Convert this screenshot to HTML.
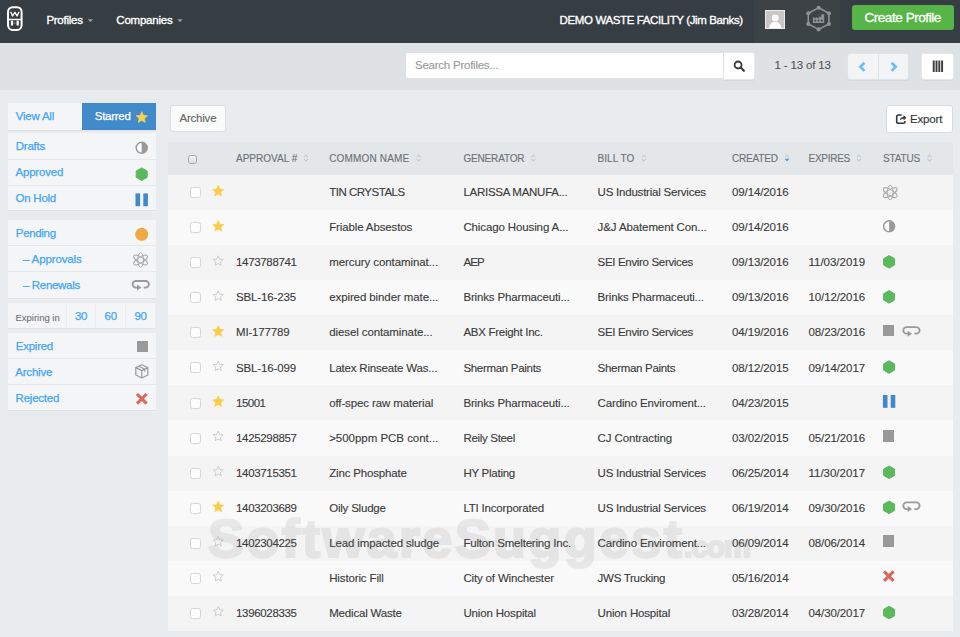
<!DOCTYPE html>
<html lang="en"><head><meta charset="utf-8"><title>Profiles - Demo Waste Facility</title>
<style>
*{box-sizing:border-box;margin:0;padding:0}
html,body{width:960px;height:637px;overflow:hidden}
body{background:#e9ecef;font-family:"Liberation Sans",sans-serif;font-size:11.5px;color:#3a3a3a;position:relative}
div,span,svg,header,aside,main{position:absolute;display:block}
svg:not(.i){position:static;display:block}
.t{white-space:pre;line-height:14px;height:14px;-webkit-text-stroke:.12px currentColor}
.i{display:block;overflow:visible}
.nav{left:0;top:0;width:960px;height:43px;background:#363d43}
.nv{color:#fff;-webkit-text-stroke:.35px #fff}
.nv2{color:#fff;-webkit-text-stroke:.3px #fff}
.nv3{color:#fff;-webkit-text-stroke:.25px #fff}
.sec{background:#3b4347}
.user{background:#c9c7c5;border:1px solid #ecebea;overflow:hidden}
.create{border-radius:3px;background:#57b548}
.sub{left:0;top:0;width:960px;height:90px}
.sub:before{content:"";position:absolute;left:0;top:43px;width:960px;height:47px;background:#dee2e5}
.inp{background:#fff;border-radius:2px 0 0 2px}
.sbtn{background:#fff;border:1px solid #e6e9eb;border-left-color:#dfe2e5;border-radius:0 3px 3px 0;box-shadow:0 1px 0 rgba(0,0,0,.04)}
.pg{background:#f3f4f6;border:1px solid #e1e4e7;border-radius:3px;box-shadow:0 1px 0 rgba(0,0,0,.04)}
.pgd{background:#dfe2e5}
.colb{background:#fff;border:1px solid #e6e9eb;border-radius:3px;box-shadow:0 1px 0 rgba(0,0,0,.04)}
.btn{background:#f9fafa;border:1px solid #dcdfe2;border-radius:3px}
.btn.ex{background:#fff;border-color:#d9dcdf}
.side{left:0;top:0}
.p{background:#f4f5f7;box-shadow:0 1px 0 #dfe2e5}
.sp{background:#e6e9ec}
.bl{color:#42a5f5;-webkit-text-stroke:.25px #42a5f5}
.starred{background:#428bca}
.sq{background:#999}
.tbl{left:0;top:0}
.th{background:#e4e7ea}
.hd{color:#6c7176}
.hcb{border:1px solid #a6a6a6;border-radius:2.5px;background:linear-gradient(#f4f4f4,#dcdcdc)}
.r{background:#f9f9f9}
.r.odd{background:#f4f4f4}
.cb{background:#fdfdfd;border:1px solid #d6d6d6;border-radius:2.5px}
.wm{left:208px;top:503px;height:70px;line-height:70px;font-weight:bold;color:#6e6e6e;-webkit-text-stroke:2.2px #6e6e6e;opacity:.115;white-space:nowrap}
.wm span{position:static;display:inline}
.wm1{font-size:54px}
.wm2{font-size:30px}
</style></head>
<body>
<header class="nav">
<svg class="i" style="left:6px;top:5px" width="18" height="27" viewBox="0 0 18 27"><g transform="translate(0 0) scale(1 1)"><rect x="2.05" y="2.2" width="13.55" height="22.7" rx="4.6" ry="4.6" fill="none" stroke="#fff" stroke-width="2"/><path d="M2.5 14.5h12.7" stroke="#fff" stroke-width="1.5"/><path d="M4.7 6.7l1.9 4.3 2.25-3.7 2.25 3.7 1.9-4.3" fill="none" stroke="#fff" stroke-width="1.4" stroke-linejoin="round"/><path d="M6 15.8v4.8M11.7 15.8v4.8" stroke="#fff" stroke-width="2.3"/><path d="M8.85 17.5v1.2" stroke="#fff" stroke-width="1" opacity=".7"/></g></svg>
<span class="t nv" style="left:46.4px;top:13px;letter-spacing:-0.26px">Profiles</span>
<svg class="i" style="left:87px;top:19px" width="6" height="4" viewBox="0 0 6 4"><g transform="translate(0.8 0.2) scale(1 1)"><path d="M0 0h5.2L2.6 3z" fill="#979ca0"/></g></svg>
<span class="t nv" style="left:116.3px;top:13px;letter-spacing:-0.22px">Companies</span>
<svg class="i" style="left:177px;top:19px" width="6" height="4" viewBox="0 0 6 4"><g transform="translate(0.4 0.2) scale(1 1)"><path d="M0 0h5.2L2.6 3z" fill="#979ca0"/></g></svg>
<span class="t nv" style="left:559.6px;top:13px;letter-spacing:-0.38px">DEMO WASTE FACILITY (Jim Banks)</span>
<div class="sec" style="left:754px;top:0px;width:86px;height:43px"></div>
<div class="user" style="left:765px;top:9.5px;width:20px;height:19.5px"><svg width="19" height="18.5" viewBox="0 0 20 19.5"><circle cx="9.7" cy="7.3" r="3.6" fill="#fff"/><path d="M3.3 19.5c0-5.8 2.6-8 6.4-8s6.4 2.2 6.4 8z" fill="#fff"/></svg></div>
<svg class="i" style="left:805px;top:5px" width="27" height="27" viewBox="0 0 27 27"><g transform="translate(0 0) scale(1 1)"><path d="M13.6 2.8 L23.9 8.2 L23.9 19 L13.6 24.4 L3.3 19 L3.3 8.2Z" fill="none" stroke="#8e9296" stroke-width="1.6"/><g fill="#8e9296"><circle cx="13.6" cy="2.8" r="2.05"/><circle cx="23.9" cy="8.2" r="2.05"/><circle cx="23.9" cy="19" r="2.05"/><circle cx="13.6" cy="24.4" r="2.05"/><circle cx="3.3" cy="19" r="2.05"/><circle cx="3.3" cy="8.2" r="2.05"/><path d="M7.9 18.1v-6.2l2.9 1.6v-1.6l2.9 1.6V9.2h5.5v8.9z"/></g><g fill="#3b4347"><rect x="9.5" y="14.8" width="1.7" height="1.6"/><rect x="12.7" y="14.8" width="1.7" height="1.6"/><rect x="15.9" y="14.8" width="1.7" height="1.6"/><rect x="13.7" y="9.2" width="2.6" height="2.6"/></g></g></svg>
<div class="create" style="left:852px;top:5px;width:102px;height:25px"></div>
<span class="t nv2" style="left:864.4px;top:11px;letter-spacing:-0.43px;font-size:13.5px">Create Profile</span>
</header>
<div class="sub">
<div class="inp" style="left:405.5px;top:53px;width:318px;height:25px"></div>
<span class="t" style="left:415px;top:58px;letter-spacing:-0.24px;color:#999">Search Profiles...</span>
<div class="sbtn" style="left:723px;top:52px;width:32px;height:28px"></div>
<svg class="i" style="left:733px;top:60px" width="12" height="12" viewBox="0 0 12 12"><g transform="translate(0.4 0.3) scale(1 1)"><circle cx="4.7" cy="4.7" r="3.5" fill="none" stroke="#3a3a3a" stroke-width="1.8"/><path d="M7.3 7.3l3.2 3.2" stroke="#3a3a3a" stroke-width="2.1" stroke-linecap="round"/></g></svg>
<span class="t" style="left:774.6px;top:58px;letter-spacing:-0.17px;color:#555">1 - 13 of 13</span>
<div class="pg" style="left:847px;top:53px;width:62px;height:27px"></div>
<div class="pgd" style="left:878px;top:54px;width:1px;height:25px"></div>
<svg class="i" style="left:858px;top:61px" width="8" height="11" viewBox="0 0 8 11"><g transform="translate(0.3 0.6) scale(1 1)"><path d="M6.2 1.1L2.1 5.2l4.1 4.1" fill="none" stroke="#6cbdf7" stroke-width="2.7"/></g></svg>
<svg class="i" style="left:890px;top:61px" width="8" height="11" viewBox="0 0 8 11"><g transform="translate(0.4 0.6) scale(1 1)"><path d="M1.2 1.1l4.1 4.1-4.1 4.1" fill="none" stroke="#6cbdf7" stroke-width="2.7"/></g></svg>
<div class="colb" style="left:921px;top:53px;width:33px;height:27px"></div>
<svg class="i" style="left:932px;top:60px" width="12" height="12" viewBox="0 0 12 12"><g transform="translate(0.7 0.6) scale(1 1)"><path d="M1 0v11.3M3.8 0v11.3M6.6 0v11.3M9.4 0v11.3" stroke="#3c3c3c" stroke-width="1.9"/></g></svg>
</div>
<div class="btn" style="left:169.5px;top:105px;width:56px;height:26.5px"></div>
<span class="t" style="left:179.5px;top:111px;letter-spacing:-0.22px;color:#666">Archive</span>
<div class="btn ex" style="left:885.5px;top:105px;width:67.5px;height:27.5px"></div>
<svg class="i" style="left:895px;top:113px" width="12" height="12" viewBox="0 0 12 12"><g transform="translate(0.3 0.7) scale(0.917 0.917)"><path d="M7 1.5H3.2A1.7 1.7 0 0 0 1.5 3.2v5.6a1.7 1.7 0 0 0 1.7 1.7h5.6a1.7 1.7 0 0 0 1.7-1.7V8" fill="none" stroke="#333" stroke-width="1.7"/><path d="M5 7.5c0-2.5 1.5-4 4-4V1.5l3 3-3 3V5.5c-1.5 0-2.8.5-4 2z" fill="#333"/></g></svg>
<span class="t" style="left:910px;top:112px;letter-spacing:-0.17px;color:#333">Export</span>
<aside class="side"><div class="p" style="left:8px;top:103px;width:148px;height:27px"></div>
<div class="starred" style="left:81.5px;top:103px;width:74.5px;height:26.5px"></div>
<span class="t bl" style="left:15.8px;top:109px;letter-spacing:-0.23px">View All</span>
<span class="t nv3" style="left:94.8px;top:109px;letter-spacing:-0.27px">Starred</span>
<svg class="i" style="left:135px;top:110px" width="14" height="14" viewBox="0 0 14 14"><g transform="translate(0.5 0.9) scale(0.525 0.525)"><path d="M12 1.5l3.1 7 7.6.8-5.7 5.1 1.6 7.5L12 18.1l-6.6 3.8 1.6-7.5L1.3 9.3l7.6-.8z" fill="#f9d24f" stroke="#f9d24f" stroke-width="1.3" stroke-linejoin="round"/></g></svg>
<div class="p" style="left:8px;top:132.5px;width:148px;height:77.5px"></div>
<div class="sp" style="left:8px;top:158.5px;width:148px;height:1px"></div>
<div class="sp" style="left:8px;top:185px;width:148px;height:1px"></div>
<span class="t bl" style="left:15.8px;top:139px;letter-spacing:-0.25px">Drafts</span>
<svg class="i" style="left:135px;top:141px" width="14" height="14" viewBox="0 0 14 14"><g transform="translate(0.2 0.3) scale(1 1)"><circle cx="6.5" cy="6.5" r="5.5" fill="#fcfcfc" stroke="#9a9a9a" stroke-width="1.5"/><path d="M6.5 1a5.5 5.5 0 0 1 0 11z" fill="#9a9a9a"/></g></svg>
<span class="t bl" style="left:15.5px;top:165px;letter-spacing:-0.2px">Approved</span>
<svg class="i" style="left:135px;top:167px" width="14" height="15" viewBox="0 0 14 15"><g transform="translate(0.2 0.2) scale(1 1)"><path d="M6.5 0.7l5.5 3.15v6.3l-5.5 3.15L1 10.15v-6.3z" fill="#5cb85c" stroke="#5cb85c" stroke-width="1" stroke-linejoin="round"/></g></svg>
<span class="t bl" style="left:15.5px;top:191px;letter-spacing:-0.24px">On Hold</span>
<svg class="i" style="left:135px;top:193px" width="13" height="14" viewBox="0 0 13 14"><g transform="translate(0.5 0.4) scale(1 1)"><rect x="0" y="0" width="4.6" height="12.8" fill="#3f88cc"/><rect x="7.8" y="0" width="4.6" height="12.8" fill="#3f88cc"/></g></svg>
<div class="p" style="left:8px;top:219.5px;width:148px;height:78px"></div>
<div class="sp" style="left:8px;top:245px;width:148px;height:1px"></div>
<div class="sp" style="left:8px;top:271px;width:148px;height:1px"></div>
<span class="t bl" style="left:15.8px;top:226px;letter-spacing:-0.32px">Pending</span>
<svg class="i" style="left:135px;top:227px" width="14" height="14" viewBox="0 0 14 14"><g transform="translate(0.1 0.7) scale(1 1)"><circle cx="6.6" cy="6.6" r="6.5" fill="#f0a845"/></g></svg>
<span class="t bl" style="left:22.9px;top:252px;letter-spacing:-0.12px">– Approvals</span>
<svg class="i" style="left:132px;top:252px" width="17" height="16" viewBox="0 0 17 16"><g transform="translate(0.6 0) scale(1 1)"><g fill="none" stroke="#a8a8a8" stroke-width=".95"><ellipse cx="8" cy="8" rx="7.2" ry="2.9" transform="rotate(90 8 8)"/><ellipse cx="8" cy="8" rx="7.9" ry="2.9" transform="rotate(32 8 8)"/><ellipse cx="8" cy="8" rx="7.9" ry="2.9" transform="rotate(-32 8 8)"/></g></g></svg>
<span class="t bl" style="left:22.9px;top:278px;letter-spacing:-0.31px">– Renewals</span>
<svg class="i" style="left:131px;top:280px" width="19" height="11" viewBox="0 0 19 11"><g transform="translate(0.7 0) scale(1 1)"><path d="M12 7.6h1.9a3.3 3.3 0 0 0 0-6.6H4.2a3.3 3.3 0 0 0 0 6.6h2" fill="none" stroke="#9a9a9a" stroke-width="1.8"/><path d="M5.3 4.6l4.4 3-4.4 3z" fill="#9a9a9a"/></g></svg>
<div class="p" style="left:8px;top:303px;width:58px;height:25px"></div>
<div class="p" style="left:67px;top:303px;width:28px;height:25px"></div>
<div class="p" style="left:96px;top:303px;width:29px;height:25px"></div>
<div class="p" style="left:126px;top:303px;width:29px;height:25px"></div>
<span class="t" style="left:15.5px;top:311px;letter-spacing:-0.01px;font-size:9.5px;color:#737373">Expiring in</span>
<span class="t bl" style="left:74.9px;top:309px;letter-spacing:-0.3px">30</span>
<span class="t bl" style="left:104.6px;top:309px;letter-spacing:-0.3px">60</span>
<span class="t bl" style="left:134.4px;top:309px;letter-spacing:-0.3px">90</span>
<div class="p" style="left:8px;top:333px;width:148px;height:77px"></div>
<div class="sp" style="left:8px;top:358px;width:148px;height:1px"></div>
<div class="sp" style="left:8px;top:384px;width:148px;height:1px"></div>
<span class="t bl" style="left:15.8px;top:339px;letter-spacing:-0.26px">Expired</span>
<div class="sq" style="left:136.95px;top:340.65px;width:11.3px;height:11.5px"></div>
<span class="t bl" style="left:15.3px;top:365px;letter-spacing:-0.22px">Archive</span>
<svg class="i" style="left:134px;top:363px" width="16" height="16" viewBox="0 0 16 16"><g transform="translate(0.3 0.9) scale(1 1)"><g fill="none" stroke="#9a9a9a" stroke-width="1.2" stroke-linejoin="round"><path d="M7.5 0.9l6 2.8v7.4l-6 3-6-3V3.7z"/><path d="M1.5 3.7l6 3 6-3M7.5 6.7v7.4M4.5 2.3l6 3v2.5"/></g></g></svg>
<span class="t bl" style="left:15.6px;top:391px;letter-spacing:-0.24px">Rejected</span>
<svg class="i" style="left:135px;top:392px" width="13" height="13" viewBox="0 0 13 13"><g transform="translate(0.8 0.7) scale(1 1)"><path d="M1.2 1.3l9.6 9.6M10.8 1.3l-9.6 9.6" stroke="#d9695a" stroke-width="3.1" fill="none"/></g></svg></aside>
<main class="tbl"><div class="th" style="left:168px;top:142px;width:785.3px;height:33px"></div>
<div class="hcb" style="left:188.3px;top:155px;width:9px;height:9px"></div>
<span class="t hd" style="left:236px;top:152px;letter-spacing:0.01px;font-size:10px">APPROVAL #</span>
<svg class="i" style="left:303px;top:154px" width="6" height="8" viewBox="0 0 6 8"><g transform="translate(0.6 0.5) scale(0.889 0.923)"><path d="M0.5 2.9L2.7 0.7l2.2 2.2M0.5 4.9l2.2 2.2 2.2-2.2" fill="none" stroke="#c2c7cc" stroke-width="1.1"/></g></svg>
<span class="t hd" style="left:329.2px;top:152px;letter-spacing:0.17px;font-size:10px">COMMON NAME</span>
<svg class="i" style="left:416px;top:154px" width="6" height="8" viewBox="0 0 6 8"><g transform="translate(0.2 0.5) scale(0.889 0.923)"><path d="M0.5 2.9L2.7 0.7l2.2 2.2M0.5 4.9l2.2 2.2 2.2-2.2" fill="none" stroke="#c2c7cc" stroke-width="1.1"/></g></svg>
<span class="t hd" style="left:463.4px;top:152px;letter-spacing:-0.16px;font-size:10px">GENERATOR</span>
<svg class="i" style="left:531px;top:154px" width="5" height="8" viewBox="0 0 5 8"><g transform="translate(0 0.5) scale(0.889 0.923)"><path d="M0.5 2.9L2.7 0.7l2.2 2.2M0.5 4.9l2.2 2.2 2.2-2.2" fill="none" stroke="#c2c7cc" stroke-width="1.1"/></g></svg>
<span class="t hd" style="left:597.6px;top:152px;letter-spacing:0.03px;font-size:10px">BILL TO</span>
<svg class="i" style="left:641px;top:154px" width="6" height="8" viewBox="0 0 6 8"><g transform="translate(0.3 0.5) scale(0.889 0.923)"><path d="M0.5 2.9L2.7 0.7l2.2 2.2M0.5 4.9l2.2 2.2 2.2-2.2" fill="none" stroke="#c2c7cc" stroke-width="1.1"/></g></svg>
<span class="t hd" style="left:732px;top:152px;letter-spacing:-0.18px;font-size:10px">CREATED</span>
<svg class="i" style="left:784px;top:154px" width="6" height="8" viewBox="0 0 6 8"><g transform="translate(0.6 0.5) scale(0.889 0.923)"><path d="M0.5 2.9L2.7 0.7l2.2 2.2" fill="none" stroke="#c2c7cc" stroke-width="1.1"/><path d="M2.7 7.6L5.2 4.6H0.2z" fill="#3d8fd6"/></g></svg>
<span class="t hd" style="left:808.5px;top:152px;letter-spacing:-0.27px;font-size:10px">EXPIRES</span>
<svg class="i" style="left:856px;top:154px" width="6" height="8" viewBox="0 0 6 8"><g transform="translate(0.6 0.5) scale(0.889 0.923)"><path d="M0.5 2.9L2.7 0.7l2.2 2.2M0.5 4.9l2.2 2.2 2.2-2.2" fill="none" stroke="#c2c7cc" stroke-width="1.1"/></g></svg>
<span class="t hd" style="left:882.9px;top:152px;letter-spacing:-0.13px;font-size:10px">STATUS</span>
<svg class="i" style="left:927px;top:154px" width="5" height="8" viewBox="0 0 5 8"><g transform="translate(0.2 0.5) scale(0.889 0.923)"><path d="M0.5 2.9L2.7 0.7l2.2 2.2M0.5 4.9l2.2 2.2 2.2-2.2" fill="none" stroke="#c2c7cc" stroke-width="1.1"/></g></svg>
<div class="r odd" style="left:168px;top:175px;width:785.3px;height:35px"></div>
<div class="cb" style="left:190px;top:187.1px;width:11px;height:11px"></div>
<svg class="i" style="left:212px;top:184px" width="13" height="14" viewBox="0 0 13 14"><g transform="translate(0 0.7) scale(0.517 0.517)"><path d="M12 1.5l3.1 7 7.6.8-5.7 5.1 1.6 7.5L12 18.1l-6.6 3.8 1.6-7.5L1.3 9.3l7.6-.8z" fill="#f9cd48" stroke="#f9cd48" stroke-width="1.3" stroke-linejoin="round"/></g></svg>
<span class="t" style="left:329.2px;top:185px;letter-spacing:-0.49px">TIN CRYSTALS</span>
<span class="t" style="left:463.4px;top:185px;letter-spacing:-0.27px">LARISSA MANUFA...</span>
<span class="t" style="left:597.6px;top:185px;letter-spacing:-0.22px">US Industrial Services</span>
<span class="t" style="left:732px;top:185px;letter-spacing:-0.11px">09/14/2016</span>
<svg class="i" style="left:882px;top:184px" width="17" height="17" viewBox="0 0 17 17"><g transform="translate(0.2 0.6) scale(1 1)"><g fill="none" stroke="#a8a8a8" stroke-width=".95"><ellipse cx="8" cy="8" rx="7.2" ry="2.9" transform="rotate(90 8 8)"/><ellipse cx="8" cy="8" rx="7.9" ry="2.9" transform="rotate(32 8 8)"/><ellipse cx="8" cy="8" rx="7.9" ry="2.9" transform="rotate(-32 8 8)"/></g></g></svg>
<div class="r" style="left:168px;top:210px;width:785.3px;height:35px"></div>
<div class="cb" style="left:190px;top:222.17px;width:11px;height:11px"></div>
<svg class="i" style="left:212px;top:219px" width="13" height="14" viewBox="0 0 13 14"><g transform="translate(0 0.77) scale(0.517 0.517)"><path d="M12 1.5l3.1 7 7.6.8-5.7 5.1 1.6 7.5L12 18.1l-6.6 3.8 1.6-7.5L1.3 9.3l7.6-.8z" fill="#f9cd48" stroke="#f9cd48" stroke-width="1.3" stroke-linejoin="round"/></g></svg>
<span class="t" style="left:329.2px;top:220px;letter-spacing:-0.13px">Friable Absestos</span>
<span class="t" style="left:463.4px;top:220px;letter-spacing:-0.12px">Chicago Housing A...</span>
<span class="t" style="left:597.6px;top:220px;letter-spacing:-0.11px">J&amp;J Abatement Con...</span>
<span class="t" style="left:732px;top:220px;letter-spacing:-0.11px">09/14/2016</span>
<svg class="i" style="left:882px;top:219px" width="14" height="14" viewBox="0 0 14 14"><g transform="translate(0.6 0.87) scale(1 1)"><circle cx="6.5" cy="6.5" r="5.5" fill="#fcfcfc" stroke="#9a9a9a" stroke-width="1.5"/><path d="M6.5 1a5.5 5.5 0 0 1 0 11z" fill="#9a9a9a"/></g></svg>
<div class="r odd" style="left:168px;top:245px;width:785.3px;height:35px"></div>
<div class="cb" style="left:190px;top:257.24px;width:11px;height:11px"></div>
<svg class="i" style="left:212px;top:254px" width="13" height="13" viewBox="0 0 13 13"><g transform="translate(0 0.34) scale(0.517 0.517)"><path d="M12 2.8l2.8 6.4 6.9.7-5.2 4.6 1.5 6.8L12 17.8l-6 3.5 1.5-6.8-5.2-4.6 6.9-.7z" fill="none" stroke="#c6c6c6" stroke-width="1.6" stroke-linejoin="round"/></g></svg>
<span class="t" style="left:236px;top:255px;letter-spacing:-0.33px">1473788741</span>
<span class="t" style="left:329.2px;top:255px;letter-spacing:-0.08px">mercury contaminat...</span>
<span class="t" style="left:463.4px;top:255px;letter-spacing:-0.81px">AEP</span>
<span class="t" style="left:597.6px;top:255px;letter-spacing:-0.33px">SEI Enviro Services</span>
<span class="t" style="left:732px;top:255px;letter-spacing:-0.11px">09/13/2016</span>
<span class="t" style="left:808.5px;top:255px;letter-spacing:-0.02px">11/03/2019</span>
<svg class="i" style="left:882px;top:254px" width="14" height="15" viewBox="0 0 14 15"><g transform="translate(0.6 0.84) scale(1 1)"><path d="M6.5 0.7l5.5 3.15v6.3l-5.5 3.15L1 10.15v-6.3z" fill="#5cb85c" stroke="#5cb85c" stroke-width="1" stroke-linejoin="round"/></g></svg>
<div class="r" style="left:168px;top:280px;width:785.3px;height:35px"></div>
<div class="cb" style="left:190px;top:292.31px;width:11px;height:11px"></div>
<svg class="i" style="left:212px;top:289px" width="13" height="13" viewBox="0 0 13 13"><g transform="translate(0 0.41) scale(0.517 0.517)"><path d="M12 2.8l2.8 6.4 6.9.7-5.2 4.6 1.5 6.8L12 17.8l-6 3.5 1.5-6.8-5.2-4.6 6.9-.7z" fill="none" stroke="#c6c6c6" stroke-width="1.6" stroke-linejoin="round"/></g></svg>
<span class="t" style="left:236px;top:290px;letter-spacing:-0.14px">SBL-16-235</span>
<span class="t" style="left:329.2px;top:290px;letter-spacing:-0.1px">expired binder mate...</span>
<span class="t" style="left:463.4px;top:290px;letter-spacing:-0.15px">Brinks Pharmaceuti...</span>
<span class="t" style="left:597.6px;top:290px;letter-spacing:-0.15px">Brinks Pharmaceuti...</span>
<span class="t" style="left:732px;top:290px;letter-spacing:-0.11px">09/13/2016</span>
<span class="t" style="left:808.5px;top:290px;letter-spacing:-0.11px">10/12/2016</span>
<svg class="i" style="left:882px;top:289px" width="14" height="15" viewBox="0 0 14 15"><g transform="translate(0.6 0.91) scale(1 1)"><path d="M6.5 0.7l5.5 3.15v6.3l-5.5 3.15L1 10.15v-6.3z" fill="#5cb85c" stroke="#5cb85c" stroke-width="1" stroke-linejoin="round"/></g></svg>
<div class="r odd" style="left:168px;top:315px;width:785.3px;height:35px"></div>
<div class="cb" style="left:190px;top:327.38px;width:11px;height:11px"></div>
<svg class="i" style="left:212px;top:324px" width="13" height="14" viewBox="0 0 13 14"><g transform="translate(0 0.98) scale(0.517 0.517)"><path d="M12 1.5l3.1 7 7.6.8-5.7 5.1 1.6 7.5L12 18.1l-6.6 3.8 1.6-7.5L1.3 9.3l7.6-.8z" fill="#f9cd48" stroke="#f9cd48" stroke-width="1.3" stroke-linejoin="round"/></g></svg>
<span class="t" style="left:236px;top:325px;letter-spacing:-0.18px">MI-177789</span>
<span class="t" style="left:329.2px;top:325px;letter-spacing:-0.1px">diesel contaminate...</span>
<span class="t" style="left:463.4px;top:325px;letter-spacing:-0.28px">ABX Freight Inc.</span>
<span class="t" style="left:597.6px;top:325px;letter-spacing:-0.33px">SEI Enviro Services</span>
<span class="t" style="left:732px;top:325px;letter-spacing:-0.11px">04/19/2016</span>
<span class="t" style="left:808.5px;top:325px;letter-spacing:-0.11px">08/23/2016</span>
<div class="sq" style="left:882.9px;top:324.93px;width:11.3px;height:11.5px"></div>
<svg class="i" style="left:902px;top:326px" width="19" height="11" viewBox="0 0 19 11"><g transform="translate(0.4 0.08) scale(1 1)"><path d="M12 7.6h1.9a3.3 3.3 0 0 0 0-6.6H4.2a3.3 3.3 0 0 0 0 6.6h2" fill="none" stroke="#9a9a9a" stroke-width="1.8"/><path d="M5.3 4.6l4.4 3-4.4 3z" fill="#9a9a9a"/></g></svg>
<div class="r" style="left:168px;top:350px;width:785.3px;height:35px"></div>
<div class="cb" style="left:190px;top:362.45px;width:11px;height:11px"></div>
<svg class="i" style="left:212px;top:359px" width="13" height="13" viewBox="0 0 13 13"><g transform="translate(0 0.55) scale(0.517 0.517)"><path d="M12 2.8l2.8 6.4 6.9.7-5.2 4.6 1.5 6.8L12 17.8l-6 3.5 1.5-6.8-5.2-4.6 6.9-.7z" fill="none" stroke="#c6c6c6" stroke-width="1.6" stroke-linejoin="round"/></g></svg>
<span class="t" style="left:236px;top:361px;letter-spacing:-0.14px">SBL-16-099</span>
<span class="t" style="left:329.2px;top:361px;letter-spacing:-0.19px">Latex Rinseate Was...</span>
<span class="t" style="left:463.4px;top:361px;letter-spacing:-0.3px">Sherman Paints</span>
<span class="t" style="left:597.6px;top:361px;letter-spacing:-0.3px">Sherman Paints</span>
<span class="t" style="left:732px;top:361px;letter-spacing:-0.11px">08/12/2015</span>
<span class="t" style="left:808.5px;top:361px;letter-spacing:-0.11px">09/14/2017</span>
<svg class="i" style="left:882px;top:360px" width="14" height="15" viewBox="0 0 14 15"><g transform="translate(0.6 0.05) scale(1 1)"><path d="M6.5 0.7l5.5 3.15v6.3l-5.5 3.15L1 10.15v-6.3z" fill="#5cb85c" stroke="#5cb85c" stroke-width="1" stroke-linejoin="round"/></g></svg>
<div class="r odd" style="left:168px;top:385px;width:785.3px;height:35px"></div>
<div class="cb" style="left:190px;top:397.52px;width:11px;height:11px"></div>
<svg class="i" style="left:212px;top:395px" width="13" height="13" viewBox="0 0 13 13"><g transform="translate(0 0.12) scale(0.517 0.517)"><path d="M12 1.5l3.1 7 7.6.8-5.7 5.1 1.6 7.5L12 18.1l-6.6 3.8 1.6-7.5L1.3 9.3l7.6-.8z" fill="#f9cd48" stroke="#f9cd48" stroke-width="1.3" stroke-linejoin="round"/></g></svg>
<span class="t" style="left:236px;top:396px;letter-spacing:-0.5px">15001</span>
<span class="t" style="left:329.2px;top:396px;letter-spacing:-0.12px">off-spec raw material</span>
<span class="t" style="left:463.4px;top:396px;letter-spacing:-0.15px">Brinks Pharmaceuti...</span>
<span class="t" style="left:597.6px;top:396px;letter-spacing:-0.14px">Cardino Enviroment...</span>
<span class="t" style="left:732px;top:396px;letter-spacing:-0.11px">04/23/2015</span>
<svg class="i" style="left:882px;top:395px" width="14" height="13" viewBox="0 0 14 13"><g transform="translate(0.9 0.02) scale(1 1)"><rect x="0" y="0" width="4.6" height="12.8" fill="#3f88cc"/><rect x="7.8" y="0" width="4.6" height="12.8" fill="#3f88cc"/></g></svg>
<div class="r" style="left:168px;top:420px;width:785.3px;height:36px"></div>
<div class="cb" style="left:190px;top:432.59px;width:11px;height:11px"></div>
<svg class="i" style="left:212px;top:429px" width="13" height="14" viewBox="0 0 13 14"><g transform="translate(0 0.69) scale(0.517 0.517)"><path d="M12 2.8l2.8 6.4 6.9.7-5.2 4.6 1.5 6.8L12 17.8l-6 3.5 1.5-6.8-5.2-4.6 6.9-.7z" fill="none" stroke="#c6c6c6" stroke-width="1.6" stroke-linejoin="round"/></g></svg>
<span class="t" style="left:236px;top:431px;letter-spacing:-0.33px">1425298857</span>
<span class="t" style="left:329.2px;top:431px;letter-spacing:-0.03px">&gt;500ppm PCB cont...</span>
<span class="t" style="left:463.4px;top:431px;letter-spacing:-0.31px">Reily Steel</span>
<span class="t" style="left:597.6px;top:431px;letter-spacing:-0.12px">CJ Contracting</span>
<span class="t" style="left:732px;top:431px;letter-spacing:-0.11px">03/02/2015</span>
<span class="t" style="left:808.5px;top:431px;letter-spacing:-0.11px">05/21/2016</span>
<div class="sq" style="left:882.9px;top:430.14px;width:11.3px;height:11.5px"></div>
<div class="r odd" style="left:168px;top:456px;width:785.3px;height:35px"></div>
<div class="cb" style="left:190px;top:467.66px;width:11px;height:11px"></div>
<svg class="i" style="left:212px;top:464px" width="13" height="14" viewBox="0 0 13 14"><g transform="translate(0 0.76) scale(0.517 0.517)"><path d="M12 2.8l2.8 6.4 6.9.7-5.2 4.6 1.5 6.8L12 17.8l-6 3.5 1.5-6.8-5.2-4.6 6.9-.7z" fill="none" stroke="#c6c6c6" stroke-width="1.6" stroke-linejoin="round"/></g></svg>
<span class="t" style="left:236px;top:466px;letter-spacing:-0.33px">1403715351</span>
<span class="t" style="left:329.2px;top:466px;letter-spacing:-0.17px">Zinc Phosphate</span>
<span class="t" style="left:463.4px;top:466px;letter-spacing:-0.25px">HY Plating</span>
<span class="t" style="left:597.6px;top:466px;letter-spacing:-0.22px">US Industrial Services</span>
<span class="t" style="left:732px;top:466px;letter-spacing:-0.11px">06/25/2014</span>
<span class="t" style="left:808.5px;top:466px;letter-spacing:-0.02px">11/30/2017</span>
<svg class="i" style="left:882px;top:465px" width="14" height="15" viewBox="0 0 14 15"><g transform="translate(0.6 0.26) scale(1 1)"><path d="M6.5 0.7l5.5 3.15v6.3l-5.5 3.15L1 10.15v-6.3z" fill="#5cb85c" stroke="#5cb85c" stroke-width="1" stroke-linejoin="round"/></g></svg>
<div class="r" style="left:168px;top:491px;width:785.3px;height:35px"></div>
<div class="cb" style="left:190px;top:502.73px;width:11px;height:11px"></div>
<svg class="i" style="left:212px;top:500px" width="13" height="13" viewBox="0 0 13 13"><g transform="translate(0 0.33) scale(0.517 0.517)"><path d="M12 1.5l3.1 7 7.6.8-5.7 5.1 1.6 7.5L12 18.1l-6.6 3.8 1.6-7.5L1.3 9.3l7.6-.8z" fill="#f9cd48" stroke="#f9cd48" stroke-width="1.3" stroke-linejoin="round"/></g></svg>
<span class="t" style="left:236px;top:501px;letter-spacing:-0.33px">1403203689</span>
<span class="t" style="left:329.2px;top:501px;letter-spacing:-0.21px">Oily Sludge</span>
<span class="t" style="left:463.4px;top:501px;letter-spacing:-0.19px">LTI Incorporated</span>
<span class="t" style="left:597.6px;top:501px;letter-spacing:-0.22px">US Industrial Services</span>
<span class="t" style="left:732px;top:501px;letter-spacing:-0.11px">06/19/2014</span>
<span class="t" style="left:808.5px;top:501px;letter-spacing:-0.11px">09/30/2016</span>
<svg class="i" style="left:882px;top:500px" width="14" height="15" viewBox="0 0 14 15"><g transform="translate(0.6 0.33) scale(1 1)"><path d="M6.5 0.7l5.5 3.15v6.3l-5.5 3.15L1 10.15v-6.3z" fill="#5cb85c" stroke="#5cb85c" stroke-width="1" stroke-linejoin="round"/></g></svg>
<svg class="i" style="left:902px;top:501px" width="19" height="12" viewBox="0 0 19 12"><g transform="translate(0.4 0.43) scale(1 1)"><path d="M12 7.6h1.9a3.3 3.3 0 0 0 0-6.6H4.2a3.3 3.3 0 0 0 0 6.6h2" fill="none" stroke="#9a9a9a" stroke-width="1.8"/><path d="M5.3 4.6l4.4 3-4.4 3z" fill="#9a9a9a"/></g></svg>
<div class="r odd" style="left:168px;top:526px;width:785.3px;height:35px"></div>
<div class="cb" style="left:190px;top:537.8px;width:11px;height:11px"></div>
<svg class="i" style="left:212px;top:534px" width="13" height="14" viewBox="0 0 13 14"><g transform="translate(0 0.9) scale(0.517 0.517)"><path d="M12 2.8l2.8 6.4 6.9.7-5.2 4.6 1.5 6.8L12 17.8l-6 3.5 1.5-6.8-5.2-4.6 6.9-.7z" fill="none" stroke="#c6c6c6" stroke-width="1.6" stroke-linejoin="round"/></g></svg>
<span class="t" style="left:236px;top:536px;letter-spacing:-0.33px">1402304225</span>
<span class="t" style="left:329.2px;top:536px;letter-spacing:-0.13px">Lead impacted sludge</span>
<span class="t" style="left:463.4px;top:536px;letter-spacing:-0.19px">Fulton Smeltering Inc.</span>
<span class="t" style="left:597.6px;top:536px;letter-spacing:-0.14px">Cardino Enviroment...</span>
<span class="t" style="left:732px;top:536px;letter-spacing:-0.11px">06/09/2014</span>
<span class="t" style="left:808.5px;top:536px;letter-spacing:-0.11px">08/06/2014</span>
<div class="sq" style="left:882.9px;top:535.35px;width:11.3px;height:11.5px"></div>
<div class="r" style="left:168px;top:561px;width:785.3px;height:35px"></div>
<div class="cb" style="left:190px;top:572.87px;width:11px;height:11px"></div>
<svg class="i" style="left:212px;top:569px" width="13" height="14" viewBox="0 0 13 14"><g transform="translate(0 0.97) scale(0.517 0.517)"><path d="M12 2.8l2.8 6.4 6.9.7-5.2 4.6 1.5 6.8L12 17.8l-6 3.5 1.5-6.8-5.2-4.6 6.9-.7z" fill="none" stroke="#c6c6c6" stroke-width="1.6" stroke-linejoin="round"/></g></svg>
<span class="t" style="left:329.2px;top:571px;letter-spacing:-0.13px">Historic Fill</span>
<span class="t" style="left:463.4px;top:571px;letter-spacing:-0.16px">City of Winchester</span>
<span class="t" style="left:597.6px;top:571px;letter-spacing:-0.28px">JWS Trucking</span>
<span class="t" style="left:732px;top:571px;letter-spacing:-0.11px">05/16/2014</span>
<svg class="i" style="left:882px;top:570px" width="13" height="13" viewBox="0 0 13 13"><g transform="translate(0.8 0.07) scale(1 1)"><path d="M1.2 1.3l9.6 9.6M10.8 1.3l-9.6 9.6" stroke="#d9695a" stroke-width="3.1" fill="none"/></g></svg>
<div class="r odd" style="left:168px;top:596px;width:785.3px;height:35px"></div>
<div class="cb" style="left:190px;top:607.94px;width:11px;height:11px"></div>
<svg class="i" style="left:212px;top:605px" width="13" height="13" viewBox="0 0 13 13"><g transform="translate(0 0.04) scale(0.517 0.517)"><path d="M12 2.8l2.8 6.4 6.9.7-5.2 4.6 1.5 6.8L12 17.8l-6 3.5 1.5-6.8-5.2-4.6 6.9-.7z" fill="none" stroke="#c6c6c6" stroke-width="1.6" stroke-linejoin="round"/></g></svg>
<span class="t" style="left:236px;top:606px;letter-spacing:-0.33px">1396028335</span>
<span class="t" style="left:329.2px;top:606px;letter-spacing:-0.18px">Medical Waste</span>
<span class="t" style="left:463.4px;top:606px;letter-spacing:-0.16px">Union Hospital</span>
<span class="t" style="left:597.6px;top:606px;letter-spacing:-0.16px">Union Hospital</span>
<span class="t" style="left:732px;top:606px;letter-spacing:-0.11px">03/28/2014</span>
<span class="t" style="left:808.5px;top:606px;letter-spacing:-0.11px">04/30/2017</span>
<svg class="i" style="left:882px;top:605px" width="14" height="15" viewBox="0 0 14 15"><g transform="translate(0.6 0.54) scale(1 1)"><path d="M6.5 0.7l5.5 3.15v6.3l-5.5 3.15L1 10.15v-6.3z" fill="#5cb85c" stroke="#5cb85c" stroke-width="1" stroke-linejoin="round"/></g></svg></main>
<div class="wm"><span class="wm1" style="letter-spacing:2.33px">SoftwareSuggest</span><span class="wm2" style="letter-spacing:-1.11px">.com</span></div>
</body></html>
